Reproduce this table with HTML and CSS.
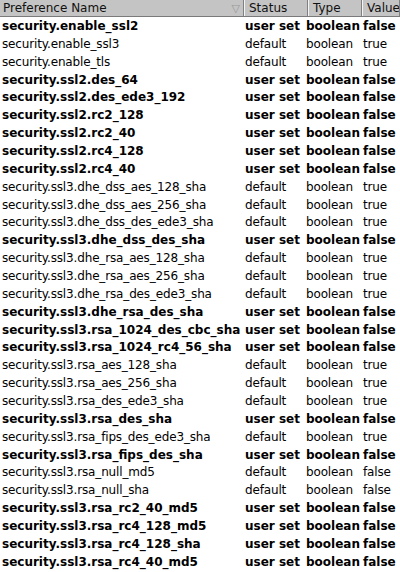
FILE: index.html
```html
<!DOCTYPE html>
<html>
<head>
<meta charset="utf-8">
<link rel="stylesheet" href="styles.css">
</head>
<body>
<div class="table">
  <div class="head">
    <div class="hc name">Preference Name<span class="sort">&#9661;</span></div>
    <div class="hc">Status</div>
    <div class="hc">Type</div>
    <div class="hc">Value</div>
  </div>
  <div class="row b"><span>security.enable_ssl2</span><span>user set</span><span>boolean</span><span>false</span></div>
  <div class="row"><span>security.enable_ssl3</span><span>default</span><span>boolean</span><span>true</span></div>
  <div class="row"><span>security.enable_tls</span><span>default</span><span>boolean</span><span>true</span></div>
  <div class="row b"><span>security.ssl2.des_64</span><span>user set</span><span>boolean</span><span>false</span></div>
  <div class="row b"><span>security.ssl2.des_ede3_192</span><span>user set</span><span>boolean</span><span>false</span></div>
  <div class="row b"><span>security.ssl2.rc2_128</span><span>user set</span><span>boolean</span><span>false</span></div>
  <div class="row b"><span>security.ssl2.rc2_40</span><span>user set</span><span>boolean</span><span>false</span></div>
  <div class="row b"><span>security.ssl2.rc4_128</span><span>user set</span><span>boolean</span><span>false</span></div>
  <div class="row b"><span>security.ssl2.rc4_40</span><span>user set</span><span>boolean</span><span>false</span></div>
  <div class="row"><span>security.ssl3.dhe_dss_aes_128_sha</span><span>default</span><span>boolean</span><span>true</span></div>
  <div class="row"><span>security.ssl3.dhe_dss_aes_256_sha</span><span>default</span><span>boolean</span><span>true</span></div>
  <div class="row"><span>security.ssl3.dhe_dss_des_ede3_sha</span><span>default</span><span>boolean</span><span>true</span></div>
  <div class="row b"><span>security.ssl3.dhe_dss_des_sha</span><span>user set</span><span>boolean</span><span>false</span></div>
  <div class="row"><span>security.ssl3.dhe_rsa_aes_128_sha</span><span>default</span><span>boolean</span><span>true</span></div>
  <div class="row"><span>security.ssl3.dhe_rsa_aes_256_sha</span><span>default</span><span>boolean</span><span>true</span></div>
  <div class="row"><span>security.ssl3.dhe_rsa_des_ede3_sha</span><span>default</span><span>boolean</span><span>true</span></div>
  <div class="row b"><span>security.ssl3.dhe_rsa_des_sha</span><span>user set</span><span>boolean</span><span>false</span></div>
  <div class="row b"><span>security.ssl3.rsa_1024_des_cbc_sha</span><span>user set</span><span>boolean</span><span>false</span></div>
  <div class="row b"><span>security.ssl3.rsa_1024_rc4_56_sha</span><span>user set</span><span>boolean</span><span>false</span></div>
  <div class="row"><span>security.ssl3.rsa_aes_128_sha</span><span>default</span><span>boolean</span><span>true</span></div>
  <div class="row"><span>security.ssl3.rsa_aes_256_sha</span><span>default</span><span>boolean</span><span>true</span></div>
  <div class="row"><span>security.ssl3.rsa_des_ede3_sha</span><span>default</span><span>boolean</span><span>true</span></div>
  <div class="row b"><span>security.ssl3.rsa_des_sha</span><span>user set</span><span>boolean</span><span>false</span></div>
  <div class="row"><span>security.ssl3.rsa_fips_des_ede3_sha</span><span>default</span><span>boolean</span><span>true</span></div>
  <div class="row b"><span>security.ssl3.rsa_fips_des_sha</span><span>user set</span><span>boolean</span><span>false</span></div>
  <div class="row"><span>security.ssl3.rsa_null_md5</span><span>default</span><span>boolean</span><span>false</span></div>
  <div class="row"><span>security.ssl3.rsa_null_sha</span><span>default</span><span>boolean</span><span>false</span></div>
  <div class="row b"><span>security.ssl3.rsa_rc2_40_md5</span><span>user set</span><span>boolean</span><span>false</span></div>
  <div class="row b"><span>security.ssl3.rsa_rc4_128_md5</span><span>user set</span><span>boolean</span><span>false</span></div>
  <div class="row b"><span>security.ssl3.rsa_rc4_128_sha</span><span>user set</span><span>boolean</span><span>false</span></div>
  <div class="row b"><span>security.ssl3.rsa_rc4_40_md5</span><span>user set</span><span>boolean</span><span>false</span></div>
</div>
</body>
</html>
```
FILE: styles.css
```css
html, body {
  margin: 0;
  padding: 0;
  background: #fff;
  overflow: hidden;
}
.table {
  width: 400px;
  font-family: "DejaVu Sans", Tahoma, sans-serif;
  font-size: 12px;
  color: #000;
}
.head {
  display: grid;
  grid-template-columns: 244px 64px 54px 38px;
  height: 16px;
  background: #c4c4c4;
  border-bottom: 1px solid #7a7a7a;
}
.hc {
  display: flex;
  align-items: center;
  padding-left: 4px;
  border-left: 1px solid #f4f4f4;
  border-right: 1px solid #808080;
  white-space: nowrap;
  overflow: hidden;
  color: #111;
  line-height: 15px;
}
.hc.name {
  border-left: none;
  padding-left: 3px;
  justify-content: space-between;
}
.sort {
  color: #9a9a9a;
  font-size: 11px;
  padding-right: 3px;
}
.row {
  display: grid;
  grid-template-columns: 244px 62px 56px 38px;
  height: 17.87px;
  line-height: 18px;
  white-space: nowrap;
  letter-spacing: -0.15px;
}
.row span {
  overflow: hidden;
}
.row span:first-child {
  padding-left: 2px;
}
.row span:nth-child(2) {
  padding-left: 1px;
}
.row span:nth-child(4) {
  padding-left: 1px;
}
.row.b {
  font-weight: bold;
  letter-spacing: 0;
}
```
